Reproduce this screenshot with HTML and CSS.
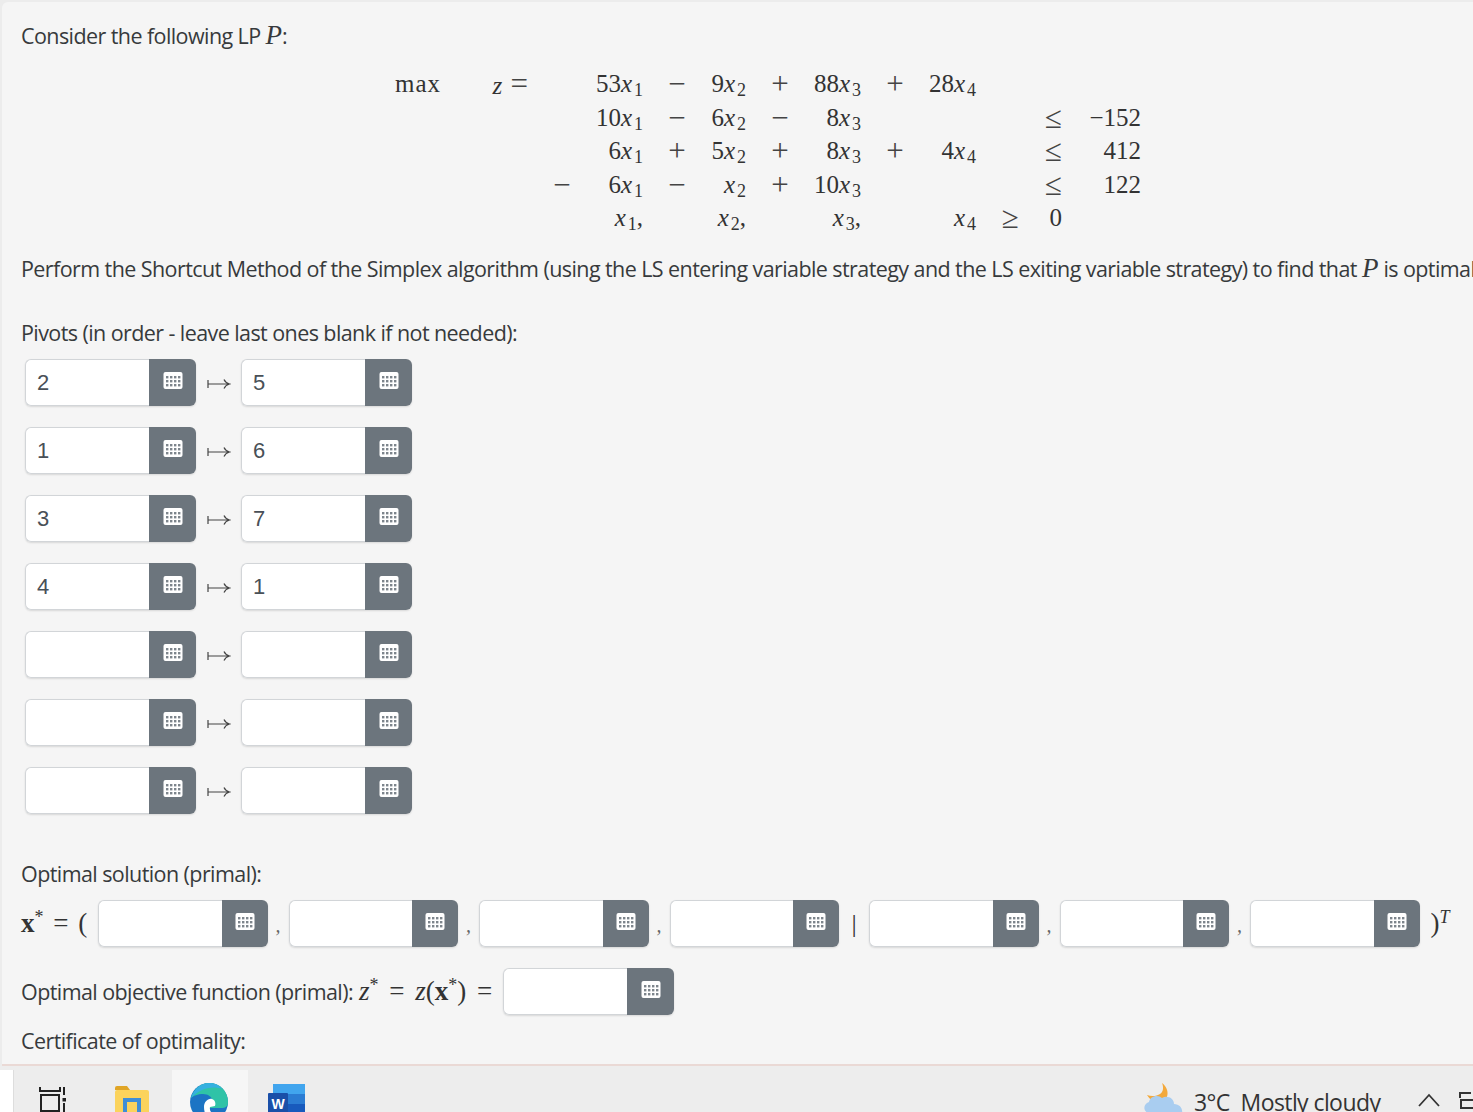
FILE: index.html
```html
<!DOCTYPE html>
<html lang="en">
<head>
<meta charset="utf-8">
<title>Simplex LP question</title>
<link rel="stylesheet" href="styles.css">
</head>
<body>
<svg class="defs" width="0" height="0" aria-hidden="true">
  <symbol id="keys" viewBox="0 0 20 17">
    <rect x="0.5" y="0" width="19" height="17" rx="2" fill="#fff"/>
    <g fill="#7d858c">
      <rect x="3" y="4" width="2.400" height="2.400"/><rect x="7" y="4" width="2.400" height="2.400"/><rect x="11" y="4" width="2.400" height="2.400"/><rect x="15" y="4" width="2.400" height="2.400"/>
      <rect x="3" y="8" width="2.400" height="2.400"/><rect x="7" y="8" width="2.400" height="2.400"/><rect x="11" y="8" width="2.400" height="2.400"/><rect x="15" y="8" width="2.400" height="2.400"/>
      <rect x="3" y="12" width="2.400" height="2.400"/><rect x="7" y="12" width="2.400" height="2.400"/><rect x="11" y="12" width="2.400" height="2.400"/><rect x="15" y="12" width="2.400" height="2.400"/>
    </g>
  </symbol>
  <symbol id="mapsto" viewBox="0 0 24 14">
    <path d="M1 3v8M1 7h21M17 2.500c1 2.300 3 3.800 5.500 4.500c-2.500.7-4.500 2.200-5.500 4.500" fill="none" stroke="#444" stroke-width="1.200"/>
  </symbol>
</svg>

<div class="screen">
  <main class="card">
    <p class="line first">Consider the following LP <i class="var">P</i>:</p>

    <div class="lp">
      <div class="l">max</div><div class="r"><i>z</i> <span class="op">=</span></div><div></div><div class="r">53<i>x</i><sub>1</sub></div><div class="c op">−</div><div class="r">9<i>x</i><sub>2</sub></div><div class="c op">+</div><div class="r">88<i>x</i><sub>3</sub></div><div class="c op">+</div><div class="r">28<i>x</i><sub>4</sub></div><div></div><div></div><div></div>
      <div></div><div></div><div></div><div class="r">10<i>x</i><sub>1</sub></div><div class="c op">−</div><div class="r">6<i>x</i><sub>2</sub></div><div class="c op">−</div><div class="r">8<i>x</i><sub>3</sub></div><div></div><div></div><div></div><div class="r op">≤</div><div class="r">−152</div>
      <div></div><div></div><div></div><div class="r">6<i>x</i><sub>1</sub></div><div class="c op">+</div><div class="r">5<i>x</i><sub>2</sub></div><div class="c op">+</div><div class="r">8<i>x</i><sub>3</sub></div><div class="c op">+</div><div class="r">4<i>x</i><sub>4</sub></div><div></div><div class="r op">≤</div><div class="r">412</div>
      <div></div><div></div><div class="c op">−</div><div class="r">6<i>x</i><sub>1</sub></div><div class="c op">−</div><div class="r"><i>x</i><sub>2</sub></div><div class="c op">+</div><div class="r">10<i>x</i><sub>3</sub></div><div></div><div></div><div></div><div class="r op">≤</div><div class="r">122</div>
      <div></div><div></div><div></div><div class="r"><i>x</i><sub>1</sub>,</div><div></div><div class="r"><i>x</i><sub>2</sub>,</div><div></div><div class="r"><i>x</i><sub>3</sub>,</div><div></div><div class="r"><i>x</i><sub>4</sub></div><div class="c op">≥</div><div class="r">0</div><div></div>
    </div>

    <p class="line perform">Perform the Shortcut Method of the Simplex algorithm (using the LS entering variable strategy and the LS exiting variable strategy) to find that <i class="var">P</i> is optimal.</p>

    <p class="line pivots-label">Pivots (in order - leave last ones blank if not needed):</p>

    <div class="pivots">
      <div class="pivot"><div class="group"><input class="field" value="2"><button class="key"><svg class="key-icon"><use href="#keys"/></svg></button></div><svg class="arrow"><use href="#mapsto"/></svg><div class="group"><input class="field" value="5"><button class="key"><svg class="key-icon"><use href="#keys"/></svg></button></div></div>
      <div class="pivot"><div class="group"><input class="field" value="1"><button class="key"><svg class="key-icon"><use href="#keys"/></svg></button></div><svg class="arrow"><use href="#mapsto"/></svg><div class="group"><input class="field" value="6"><button class="key"><svg class="key-icon"><use href="#keys"/></svg></button></div></div>
      <div class="pivot"><div class="group"><input class="field" value="3"><button class="key"><svg class="key-icon"><use href="#keys"/></svg></button></div><svg class="arrow"><use href="#mapsto"/></svg><div class="group"><input class="field" value="7"><button class="key"><svg class="key-icon"><use href="#keys"/></svg></button></div></div>
      <div class="pivot"><div class="group"><input class="field" value="4"><button class="key"><svg class="key-icon"><use href="#keys"/></svg></button></div><svg class="arrow"><use href="#mapsto"/></svg><div class="group"><input class="field" value="1"><button class="key"><svg class="key-icon"><use href="#keys"/></svg></button></div></div>
      <div class="pivot"><div class="group"><input class="field"><button class="key"><svg class="key-icon"><use href="#keys"/></svg></button></div><svg class="arrow"><use href="#mapsto"/></svg><div class="group"><input class="field"><button class="key"><svg class="key-icon"><use href="#keys"/></svg></button></div></div>
      <div class="pivot"><div class="group"><input class="field"><button class="key"><svg class="key-icon"><use href="#keys"/></svg></button></div><svg class="arrow"><use href="#mapsto"/></svg><div class="group"><input class="field"><button class="key"><svg class="key-icon"><use href="#keys"/></svg></button></div></div>
      <div class="pivot"><div class="group"><input class="field"><button class="key"><svg class="key-icon"><use href="#keys"/></svg></button></div><svg class="arrow"><use href="#mapsto"/></svg><div class="group"><input class="field"><button class="key"><svg class="key-icon"><use href="#keys"/></svg></button></div></div>
    </div>

    <p class="line solution-label">Optimal solution (primal):</p>

    <div class="solution">
      <span class="math lead"><b>x</b><sup>*</sup> = (</span>
      <div class="group slim"><input class="field"><button class="key"><svg class="key-icon"><use href="#keys"/></svg></button></div>
      <span class="math sep">,</span>
      <div class="group slim"><input class="field"><button class="key"><svg class="key-icon"><use href="#keys"/></svg></button></div>
      <span class="math sep">,</span>
      <div class="group slim"><input class="field"><button class="key"><svg class="key-icon"><use href="#keys"/></svg></button></div>
      <span class="math sep">,</span>
      <div class="group slim"><input class="field"><button class="key"><svg class="key-icon"><use href="#keys"/></svg></button></div>
      <span class="math sep wide">|</span>
      <div class="group slim"><input class="field"><button class="key"><svg class="key-icon"><use href="#keys"/></svg></button></div>
      <span class="math sep">,</span>
      <div class="group slim"><input class="field"><button class="key"><svg class="key-icon"><use href="#keys"/></svg></button></div>
      <span class="math sep">,</span>
      <div class="group slim"><input class="field"><button class="key"><svg class="key-icon"><use href="#keys"/></svg></button></div>
      <span class="math tail">)<sup><i>T</i></sup></span>
    </div>

    <div class="objective">
      <span class="line-text">Optimal objective function (primal):</span>
      <span class="math obj-math"><i>z</i><sup>*</sup> = <i>z</i>(<b>x</b><sup>*</sup>) =</span>
      <div class="group"><input class="field"><button class="key"><svg class="key-icon"><use href="#keys"/></svg></button></div>
    </div>

    <p class="line certificate">Certificate of optimality:</p>
  </main>

  <footer class="taskbar">
    <div class="start-stub"></div>
    <svg class="snap" viewBox="0 0 28 40"><path d="M2 1v4h20V1M3 9h18v16H3zM2 40V29h20v11M26 1v8M26 17v23" fill="none" stroke="#222" stroke-width="2"/><rect x="24.500" y="12" width="3.500" height="3.500" fill="#222"/></svg>
    <svg class="folder" viewBox="0 0 34 40"><path d="M0 3a2 2 0 0 1 2-2h10l3 4H0z" fill="#e0a526"/><rect y="5" width="34" height="35" rx="2" fill="#fbd35c"/><rect x="10" y="15" width="14" height="14" fill="none" stroke="#3f8ed6" stroke-width="4"/></svg>
    <div class="edge-tile">
      <svg class="edge" viewBox="0 0 38 40"><circle cx="19" cy="19" r="19" fill="#1c74c4"/><path d="M1 15C4 5 12 0 19 0c11 0 19 8 19 19 0 4-2 6-7 6H18c0-3 4-5 4-8 0-3-4-6-9-6C8 11 3 13 1 15z" fill="#2fc3a7"/><path d="M1 15C4 5 12 0 19 0c6 0 10 2 13 6-8-3-20-2-31 9z" fill="#35b0e0"/><path d="M14 24c0-5 4-9 8-8 3 1 4 4 3 7l-5 1c-1 5 3 8 9 8-3 3-6 5-10 6-3-4-5-9-5-14z" fill="#fff"/></svg>
    </div>
    <svg class="word" viewBox="0 0 37 40"><rect x="5" y="0" width="32" height="40" rx="2" fill="#2b7cd3"/><rect x="5" y="0" width="32" height="10" fill="#41a5ee"/><rect x="5" y="20" width="32" height="20" fill="#185abd"/><rect y="9" width="20" height="20" rx="1" fill="#1a4fa8"/><text x="10" y="25" class="word-letter">W</text></svg>
    <svg class="weather" viewBox="0 0 40 30"><path d="M19 0c2 5 1 9-2 11-3 2-8 3-13 1 3 5 8 8 14 7 7-1 10-12 1-19z" fill="#f3a93c"/><path d="M5 30c-5-2-5-9 1-11 1-6 9-8 13-4 5-3 12 0 12 6 6 0 9 5 8 9z" fill="#a9cdf0"/></svg>
    <span class="weather-text">3°C&nbsp; Mostly cloudy</span>
    <svg class="chevron" viewBox="0 0 22 14"><path d="M1 13L11 2l10 11" fill="none" stroke="#333" stroke-width="1.800"/></svg>
    <svg class="tray" viewBox="0 0 15 30"><path d="M2 8V3h11M15 10H3v8h12M2 30v-8" fill="none" stroke="#333" stroke-width="2"/></svg>
  </footer>
</div>
</body>
</html>
```

FILE: styles.css
```css
* { box-sizing: border-box; }

html, body {
  margin: 0;
  padding: 0;
  height: 100%;
  overflow: hidden;
  background: #ececec;
}

.defs { position: absolute; }

.screen {
  width: 1473px;
  height: 1112px;
  display: flex;
  flex-direction: column;
  overflow: hidden;
  font-family: "Open Sans", "Noto Sans", sans-serif;
  color: #373a3c;
}

.card {
  height: 1064px;
  margin: 2px 0 0 2px;
  padding: 18px 0 0 19px;
  width: 1600px;
  flex: none;
  background: #f5f5f5;
  border-radius: 6px 0 0 0;
  border-bottom: 2px solid #ead9d5;
  overflow: hidden;
}

.line {
  margin: 0;
  font-size: 21.500px;
  line-height: 30px;
  white-space: nowrap;
  letter-spacing: -0.580px;
}

.line-text {
  font-size: 21.500px;
  line-height: 30px;
  white-space: nowrap;
  letter-spacing: -0.580px;
}

.var {
  font-family: "Liberation Serif", serif;
  font-size: 27px;
  letter-spacing: 0;
}

.lp {
  display: grid;
  grid-template-columns: 68px 65px 68px 47px 68px 35px 68px 47px 68px 47px 68px 18px 79px;
  grid-auto-rows: 33.500px;
  margin: 16px 0 0 374px;
  width: max-content;
  font-family: "Liberation Serif", serif;
  font-size: 25px;
  line-height: 33px;
  color: #333;
  white-space: nowrap;
}

.lp i { letter-spacing: 2px; }

.lp sub {
  font-size: 18px;
  line-height: 0;
  vertical-align: -4px;
}

.lp .l { text-align: left; letter-spacing: 1px; }
.lp .r { text-align: right; }
.lp .c { text-align: center; }
.lp .op { font-size: 31px; color: #444; }

.perform { margin-top: 18.500px; }
.pivots-label { margin-top: 34px; }

.pivots {
  display: flex;
  flex-direction: column;
  gap: 21px;
  margin: 11px 0 0 4px;
}

.pivot {
  display: flex;
  align-items: center;
}

.arrow {
  width: 24px;
  height: 14px;
  margin: 2px 10px 0 11px;
}

.group {
  display: flex;
  width: 171px;
  height: 47px;
  flex: none;
  border-radius: 6px;
  box-shadow: 0 1px 2px rgba(0, 0, 0, .12);
}

.group.slim { width: 169.500px; }
.group.slim .key { width: 46px; }

.field {
  flex: 1;
  min-width: 0;
  height: 100%;
  padding: 0 11px;
  border: 1px solid #d2d5d8;
  border-right: 0;
  border-radius: 6px 0 0 6px;
  background: #fff;
  color: #495057;
  font-family: "Liberation Sans", Arial, sans-serif;
  font-size: 22px;
  outline: none;
}

.key {
  flex: none;
  width: 47px;
  height: 100%;
  padding: 0 0 5px;
  display: flex;
  align-items: center;
  justify-content: center;
  border: 0;
  border-radius: 0 6px 6px 0;
  background: #6c757d;
}

.key-icon { width: 20px; height: 17px; }

.solution-label { margin-top: 45px; }

.solution {
  display: flex;
  align-items: center;
  margin-top: 11px;
}

.math {
  font-family: "Liberation Serif", serif;
  font-size: 27px;
  word-spacing: 3px;
  color: #333;
}

.math sup {
  font-size: 18px;
  line-height: 0;
  vertical-align: 9px;
}

.lead { width: 77px; flex: none; white-space: nowrap; }

.sep {
  width: 21px;
  flex: none;
  text-align: center;
  font-size: 20px;
  font-style: italic;
  padding-top: 4px;
  color: #666;
}

.sep.wide { width: 30px; font-style: normal; font-size: 26px; padding-top: 0; color: #333; }

.tail { margin-left: 11px; white-space: nowrap; }

.objective {
  display: flex;
  align-items: center;
  margin-top: 21px;
}

.obj-math {
  margin: 0 11px 0 6px;
  word-spacing: 4px;
  white-space: nowrap;
}

.certificate { margin-top: 11px; }

.taskbar {
  flex: 1;
  display: flex;
  align-items: flex-start;
  background: #ededed;
  overflow: hidden;
}

.start-stub {
  width: 14px;
  height: 50px;
  margin-top: 4px;
  flex: none;
  background: #fff;
  border-right: 1px solid #ddd;
}

.snap { width: 28px; height: 40px; margin: 20px 0 0 24px; flex: none; }
.folder { width: 34px; height: 40px; margin: 19px 0 0 49px; flex: none; }

.edge-tile {
  width: 76px;
  height: 50px;
  margin: 4px 0 0 23px;
  padding: 13px 0 0 18px;
  background: #f6f6f6;
  flex: none;
}

.edge { width: 38px; height: 40px; display: block; }
.word { width: 37px; height: 40px; margin: 18px 0 0 20px; flex: none; }

.word-letter {
  font-family: "Liberation Sans", Arial, sans-serif;
  font-size: 14px;
  font-weight: 700;
  fill: #fff;
  text-anchor: middle;
}

.weather { width: 40px; height: 30px; margin: 17px 0 0 838px; flex: none; }

.weather-text {
  margin: 21px 0 0 11px;
  font-size: 23px;
  line-height: 30px;
  letter-spacing: -0.580px;
  color: #333;
  white-space: nowrap;
  flex: none;
}

.chevron { width: 22px; height: 14px; margin: 27px 0 0 38px; flex: none; }
.tray { width: 15px; height: 30px; margin: 24px 0 0 18px; flex: none; }
```
